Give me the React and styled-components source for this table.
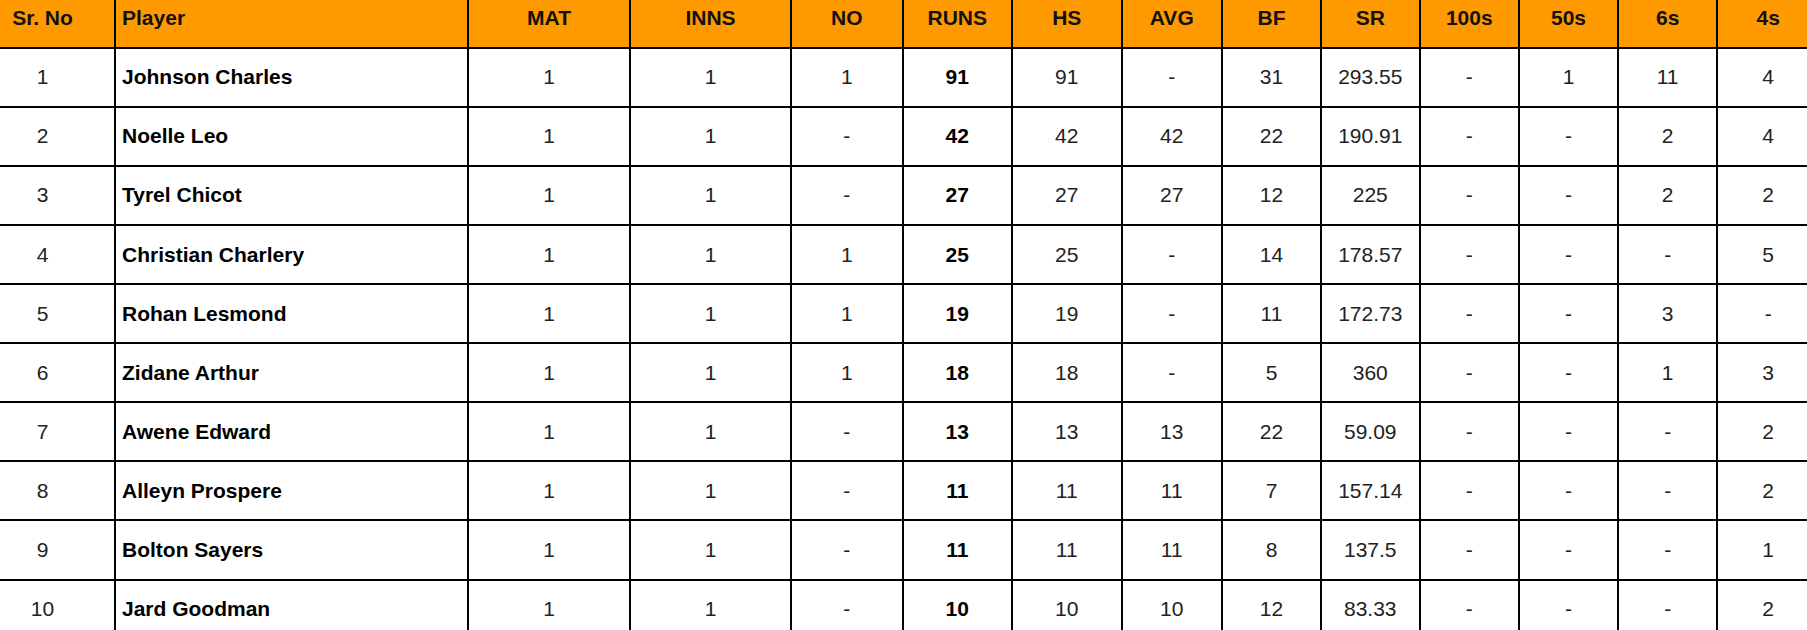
import React from 'react';
import styled, { createGlobalStyle } from 'styled-components';

const GlobalStyle = createGlobalStyle`
  html, body {
    margin: 0;
    padding: 0;
    background: #fff;
    overflow: hidden;
  }
`;

const columns = [
  { key: 'sr', label: 'Sr. No', width: 145 },
  { key: 'player', label: 'Player', width: 353, align: 'left', bold: true },
  { key: 'mat', label: 'MAT', width: 162 },
  { key: 'inns', label: 'INNS', width: 161 },
  { key: 'no', label: 'NO', width: 111.5 },
  { key: 'runs', label: 'RUNS', width: 109.5, bold: true },
  { key: 'hs', label: 'HS', width: 109.5 },
  { key: 'avg', label: 'AVG', width: 100.5 },
  { key: 'bf', label: 'BF', width: 99 },
  { key: 'sr2', label: 'SR', width: 98.5 },
  { key: 'hundreds', label: '100s', width: 99.5 },
  { key: 'fifties', label: '50s', width: 99 },
  { key: 'sixes', label: '6s', width: 99.3 },
  { key: 'fours', label: '4s', width: 101.7 },
];

const players = [
  [1, 'Johnson Charles', 1, 1, 1, 91, 91, '-', 31, '293.55', '-', 1, 11, 4],
  [2, 'Noelle Leo', 1, 1, '-', 42, 42, 42, 22, '190.91', '-', '-', 2, 4],
  [3, 'Tyrel Chicot', 1, 1, '-', 27, 27, 27, 12, '225', '-', '-', 2, 2],
  [4, 'Christian Charlery', 1, 1, 1, 25, 25, '-', 14, '178.57', '-', '-', '-', 5],
  [5, 'Rohan Lesmond', 1, 1, 1, 19, 19, '-', 11, '172.73', '-', '-', 3, '-'],
  [6, 'Zidane Arthur', 1, 1, 1, 18, 18, '-', 5, '360', '-', '-', 1, 3],
  [7, 'Awene Edward', 1, 1, '-', 13, 13, 13, 22, '59.09', '-', '-', '-', 2],
  [8, 'Alleyn Prospere', 1, 1, '-', 11, 11, 11, 7, '157.14', '-', '-', '-', 2],
  [9, 'Bolton Sayers', 1, 1, '-', 11, 11, 11, 8, '137.5', '-', '-', '-', 1],
  [10, 'Jard Goodman', 1, 1, '-', 10, 10, 10, 12, '83.33', '-', '-', '-', 2],
];

const StatsTable = styled.table`
  margin: -12.4px 0 0 -31px;
  border-collapse: collapse;
  table-layout: fixed;
  width: 1849px;
  font-family: 'Liberation Sans', Arial, sans-serif;
  font-size: 21px;
`;

const HeadRow = styled.tr`
  height: 59.1px;
  background: #ff9900;
`;

const BodyRow = styled.tr`
  height: 59.1px;
  background: #fff;
`;

const HeadCell = styled.th`
  border: 2px solid #000;
  padding: 0 6px;
  font-weight: 700;
  color: #111;
  text-align: ${({ $align }) => $align || 'center'};
  vertical-align: middle;
  white-space: nowrap;
  overflow: hidden;
`;

const Cell = styled.td`
  border: 2px solid #000;
  padding: 0 6px;
  font-weight: ${({ $bold }) => ($bold ? 700 : 400)};
  color: ${({ $bold }) => ($bold ? '#000' : '#222')};
  text-align: ${({ $align }) => $align || 'center'};
  vertical-align: middle;
  white-space: nowrap;
  overflow: hidden;
`;

export default function App() {
  return (
    <>
      <GlobalStyle />
      <StatsTable>
        <colgroup>
          {columns.map((col) => (
            <col key={col.key} style={{ width: `${col.width}px` }} />
          ))}
        </colgroup>
        <thead>
          <HeadRow>
            {columns.map((col) => (
              <HeadCell key={col.key} $align={col.align}>
                {col.label}
              </HeadCell>
            ))}
          </HeadRow>
        </thead>
        <tbody>
          {players.map((row) => (
            <BodyRow key={row[0]}>
              {row.map((value, i) => (
                <Cell
                  key={columns[i].key}
                  $align={columns[i].align}
                  $bold={columns[i].bold}>
                  {value}
                </Cell>
              ))}
            </BodyRow>
          ))}
        </tbody>
      </StatsTable>
    </>
  );
}
